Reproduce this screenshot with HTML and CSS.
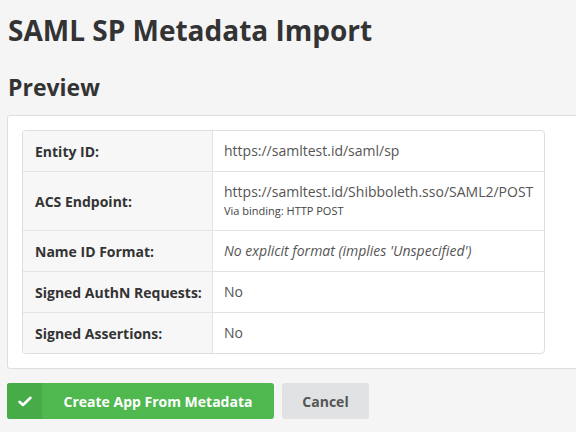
FILE: index.html
```html
<!DOCTYPE html>
<html>
<head>
<meta charset="utf-8">
<link rel="stylesheet" href="styles.css">
</head>
<body>
<div class="page">
  <h1 class="title">SAML SP Metadata Import</h1>
  <h2 class="subtitle">Preview</h2>
  <div class="card">
    <div class="details">
      <div class="row">
        <div class="label">Entity ID:</div>
        <div class="value">https://samltest.id/saml/sp</div>
      </div>
      <div class="row">
        <div class="label">ACS Endpoint:</div>
        <div class="value">https://samltest.id/Shibboleth.sso/SAML2/POST<div class="hint">Via binding: HTTP POST</div></div>
      </div>
      <div class="row">
        <div class="label">Name ID Format:</div>
        <div class="value italic">No explicit format (implies 'Unspecified')</div>
      </div>
      <div class="row">
        <div class="label">Signed AuthN Requests:</div>
        <div class="value">No</div>
      </div>
      <div class="row">
        <div class="label">Signed Assertions:</div>
        <div class="value">No</div>
      </div>
    </div>
  </div>
  <div class="actions">
    <button class="btn btn-primary"><span class="btn-icon"><svg width="14" height="11" viewBox="0 0 14 11"><path d="M1.5 5.8 L5 9 L12.5 1.8" fill="none" stroke="#fff" stroke-width="2.6" stroke-linecap="round" stroke-linejoin="round"/></svg></span><span class="btn-label">Create App From Metadata</span></button>
    <button class="btn btn-cancel">Cancel</button>
  </div>
</div>
</body>
</html>
```
FILE: styles.css
```css
html, body {
  margin: 0;
  padding: 0;
  background: #f5f5f5;
  overflow: hidden;
}
body {
  font-family: "Open Sans", "DejaVu Sans", sans-serif;
  color: #333;
  width: 576px;
  height: 432px;
}
.page {
  padding: 10px 0 0 7px;
  width: 640px;
}
.title {
  margin: 0 0 0 1px;
  font-size: 28px;
  font-weight: 700;
  line-height: 40px;
  color: #333;
}
.subtitle {
  margin: 22px 0 0 1px;
  font-size: 23px;
  font-weight: 700;
  line-height: 30px;
  color: #333;
}
.card {
  margin-top: 13px;
  background: #fff;
  border: 1px solid #dedede;
  border-radius: 3px;
  padding: 14px;
}
.details {
  width: 521px;
  border: 1px solid #dedede;
  border-radius: 4px;
  overflow: hidden;
}
.row {
  display: flex;
  border-top: 1px solid #e3e3e3;
}
.row:first-child {
  border-top: none;
}
.label {
  width: 177px;
  flex: none;
  background: #f7f7f7;
  border-right: 1px solid #e3e3e3;
  padding: 0 0 0 12px;
  font-size: 14px;
  font-weight: 700;
  color: #333;
  display: flex;
  align-items: center;
}
.value {
  padding: 10px 11px;
  font-size: 14px;
  line-height: 20px;
  color: #555;
}
.italic {
  font-style: italic;
}
.hint {
  font-size: 11px;
  line-height: 18px;
  color: #444;
}
.actions {
  display: flex;
  gap: 8px;
  margin-top: 14px;
}
.btn {
  font-family: "Open Sans", "DejaVu Sans", sans-serif;
  font-size: 14px;
  font-weight: 700;
  height: 36px;
  border: none;
  border-radius: 3px;
  padding: 0;
  display: flex;
  align-items: center;
}
.btn-primary {
  background: #4fb84f;
  color: #fff;
  width: 267px;
  overflow: hidden;
}
.btn-icon {
  width: 35px;
  height: 36px;
  background: #47ab47;
  display: flex;
  align-items: center;
  justify-content: center;
}
.btn-label {
  flex: 1;
  text-align: center;
}
.btn-cancel {
  background: #e1e2e4;
  color: #555;
  width: 87px;
  justify-content: center;
}
```
